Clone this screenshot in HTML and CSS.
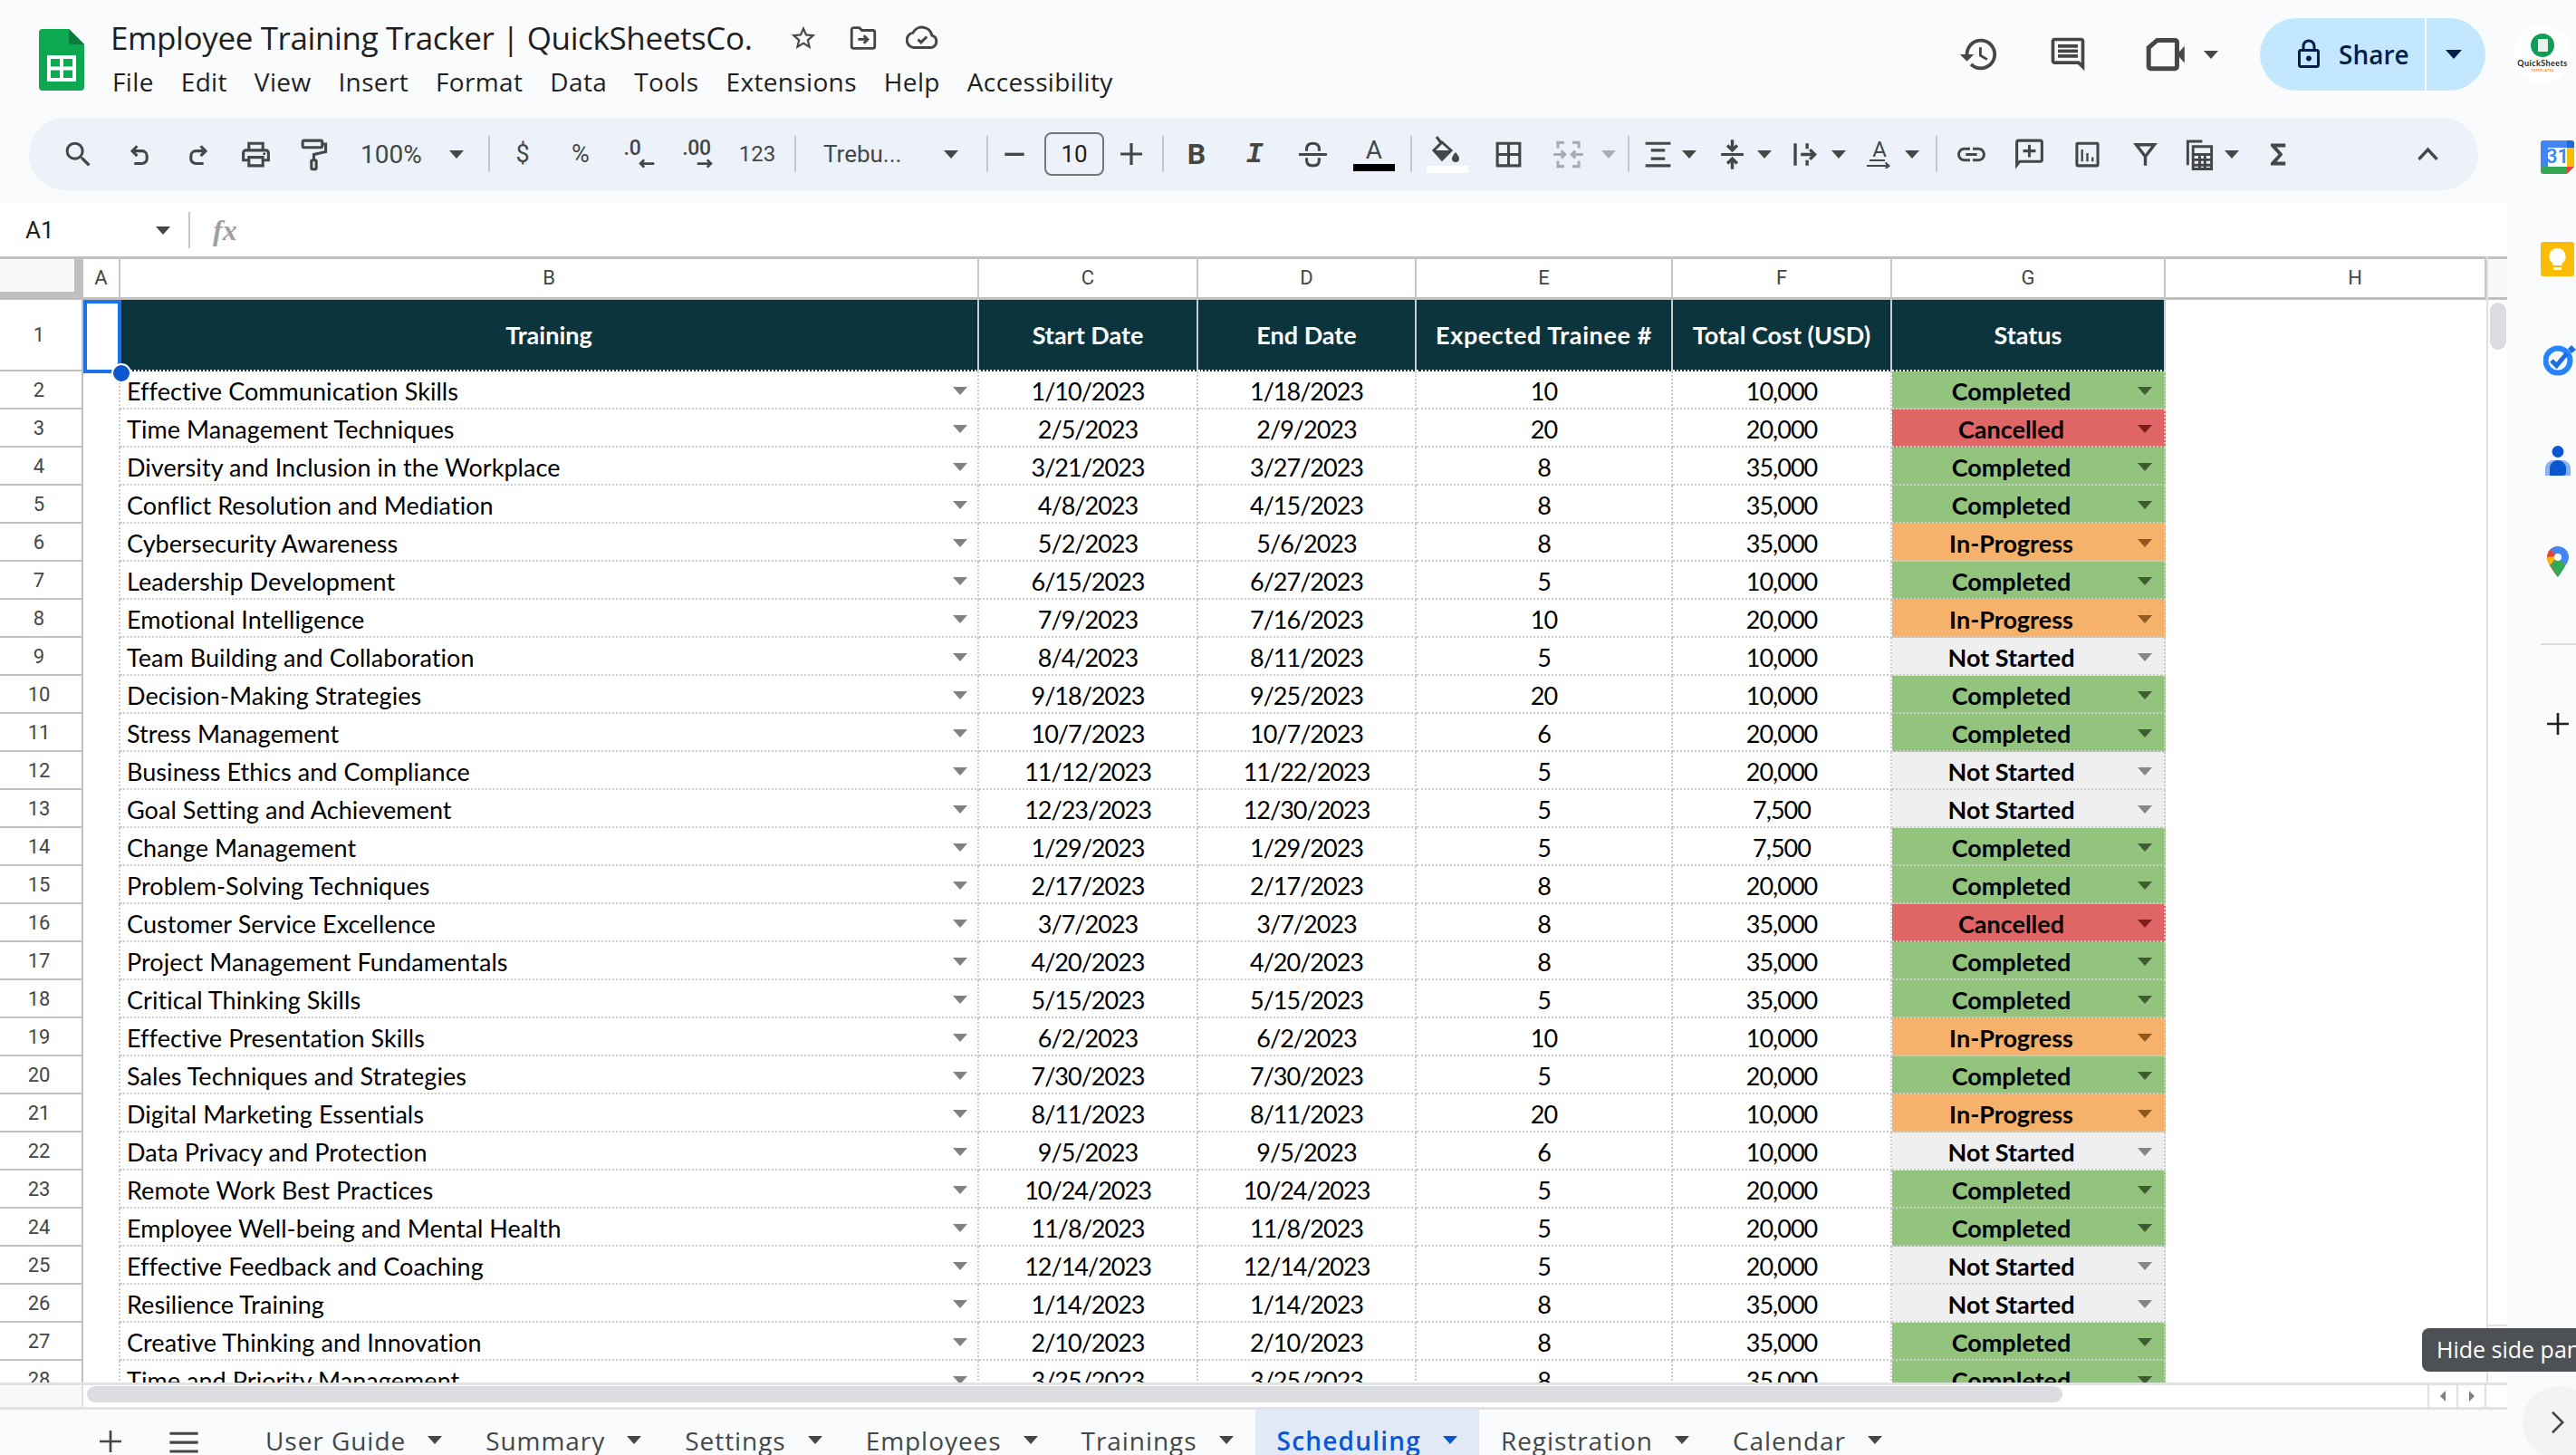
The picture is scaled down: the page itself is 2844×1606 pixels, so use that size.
FILE: index.html
```html
<!DOCTYPE html>
<html lang="en">
<head>
<meta charset="utf-8">
<title>Employee Training Tracker | QuickSheetsCo.</title>
<link rel="stylesheet" href="styles.css">
</head>
<body>
<div class="app">
<main class="main">
  <header class="head">
    <svg class="logo" viewBox="0 0 50 68"><path d="M4 0H33L50 17V64a4 4 0 0 1-4 4H4a4 4 0 0 1-4-4V4a4 4 0 0 1 4-4z" fill="#0da84f"/><path d="M33 0V13a4 4 0 0 0 4 4H50z" fill="#0b7a3a"/><path d="M9 29H41V58H9zM13 33V41.500H23V33zM27 33V41.500H37V33zM13 45.500V54H23V45.500zM27 45.500V54H37V45.500z" fill="#fff" fill-rule="evenodd"/></svg>
    <div class="titles">
      <div class="titlerow">
        <span class="doc">Employee Training Tracker | QuickSheetsCo.</span>
        <svg class="ti i-star" viewBox="0 0 24 24"><path d="M22 9.240l-7.190-.620L12 2 9.190 8.630 2 9.240l5.460 4.730L5.820 21 12 17.270 18.180 21l-1.630-7.030L22 9.240zM12 15.400l-3.760 2.270 1-4.280-3.320-2.880 4.380-.380L12 6.100l1.710 4.040 4.380.380-3.320 2.880 1 4.280L12 15.400z"/></svg>
        <svg class="ti i-move" viewBox="0 0 24 24"><path class="ln" d="M3 5.500a1.500 1.500 0 0 1 1.500-1.500H9l2 2h8.500A1.500 1.500 0 0 1 21 7.500v11a1.500 1.500 0 0 1-1.500 1.500h-15A1.500 1.500 0 0 1 3 18.500zM8 13h7M12.500 10l3 3-3 3"/></svg>
        <svg class="ti i-cloud" viewBox="0 0 24 24"><path class="ln" d="M19.300 10.100A7.500 7.500 0 0 0 5.300 8.100 5.500 5.500 0 0 0 6 19h12.800a4.600 4.600 0 0 0 .5-8.900zM9 13l2.200 2.200L15.500 11"/></svg>
      </div>
      <nav class="menu"><span>File</span><span>Edit</span><span>View</span><span>Insert</span><span>Format</span><span>Data</span><span>Tools</span><span>Extensions</span><span>Help</span><span>Accessibility</span></nav>
    </div>
    <div class="headright">
      <svg class="hi hi-hist" viewBox="0 0 24 24"><path d="M13 3a9 9 0 0 0-9 9H1l3.890 3.890.070.140L9 12H6c0-3.870 3.130-7 7-7s7 3.130 7 7-3.130 7-7 7c-1.930 0-3.680-.790-4.940-2.060l-1.420 1.420A8.954 8.954 0 0 0 13 21a9 9 0 0 0 0-18zm-1 5v5l4.280 2.540.720-1.210-3.500-2.080V8H12z"/></svg>
      <svg class="hi hi-comm" viewBox="0 0 24 24"><path d="M21.990 4c0-1.100-.890-2-1.990-2H4c-1.100 0-2 .900-2 2v12c0 1.100.900 2 2 2h14l4 4-.010-18zM20 4v13.170L18.830 16H4V4h16zM6 12h12v2H6zm0-3h12v2H6zm0-3h12v2H6z"/></svg>
      <svg class="hi hi-video" viewBox="0 0 24 24"><path class="ln2" d="M7 4.500h9.500a1 1 0 0 1 1 1v13a1 1 0 0 1-1 1h-13a1 1 0 0 1-1-1V8.500z"/><path d="M17.500 12l4-4.500v9z"/></svg>
      <i class="caret hc"></i>
      <div class="share">
        <div class="sharemain">
          <svg class="lock" viewBox="0 0 24 24"><path d="M18 8h-1V6c0-2.760-2.240-5-5-5S7 3.240 7 6v2H6c-1.100 0-2 .900-2 2v10c0 1.100.900 2 2 2h12c1.100 0 2-.900 2-2V10c0-1.100-.900-2-2-2zM9 6c0-1.660 1.340-3 3-3s3 1.340 3 3v2H9V6zm9 14H6V10h12v10zm-6-3c1.100 0 2-.900 2-2s-.900-2-2-2-2 .900-2 2 .900 2 2 2z"/></svg>
          <span>Share</span>
        </div>
        <div class="sharedrop"><i class="caret navy"></i></div>
      </div>
    </div>
  </header>

  <div class="toolwrap">
    <div class="toolbar">
      <span class="t m-search"><svg viewBox="0 0 24 24"><path d="M15.500 14h-.790l-.280-.270A6.471 6.471 0 0 0 16 9.500 6.500 6.500 0 1 0 9.500 16c1.610 0 3.090-.590 4.230-1.570l.270.280v.790l5 4.990L20.490 19l-4.990-5zm-6 0C7.010 14 5 11.990 5 9.500S7.010 5 9.500 5 14 7.010 14 9.500 11.990 14 9.500 14z"/></svg></span>
      <span class="t"><svg viewBox="0 0 24 24"><path class="ln" d="M10 6L6.500 9.500 10 13M7 9.500h6.500A3.500 3.500 0 0 1 17 13v2a3.500 3.500 0 0 1-3.500 3.500H8"/></svg></span>
      <span class="t"><svg viewBox="0 0 24 24"><path class="ln" d="M14 6l3.500 3.500L14 13M17 9.500h-6.500A3.500 3.500 0 0 0 7 13v2a3.500 3.500 0 0 0 3.500 3.500H16"/></svg></span>
      <span class="t"><svg viewBox="0 0 24 24"><path d="M19 8h-1V3H6v5H5c-1.660 0-3 1.340-3 3v6h4v4h12v-4h4v-6c0-1.660-1.340-3-3-3zM8 5h8v3H8V5zm8 14H8v-4h8v4zm2-4v-2H6v2H4v-4c0-.550.450-1 1-1h14c.550 0 1 .450 1 1v4h-2z"/><circle cx="18" cy="11.500" r="1"/></svg></span>
      <span class="t"><svg viewBox="0 0 24 24"><path class="ln" d="M5 2h12a1 1 0 0 1 1 1v3a1 1 0 0 1-1 1H5a1 1 0 0 1-1-1V3a1 1 0 0 1 1-1zM18 4.500h2.500V10l-8.500 2v4"/><rect class="ln" x="10.250" y="16" width="3.500" height="6.500" rx="1"/></svg></span>
      <span class="zoom"><span class="zoomtxt">100%</span><i class="caret"></i></span>
      <i class="sep"></i>
      <span class="t tx">$</span>
      <span class="t tx">%</span>
      <span class="t dec d1"><b>.0</b><svg viewBox="0 0 16 8"><path class="ln" d="M14 4H3M6 1L3 4l3 3"/></svg></span>
      <span class="t dec d2"><b>.00</b><svg viewBox="0 0 16 8"><path class="ln" d="M2 4h11M10 1l3 3-3 3"/></svg></span>
      <span class="t tx t123">123</span>
      <i class="sep"></i>
      <span class="fontsel"><span>Trebu...</span><i class="caret"></i></span>
      <i class="sep"></i>
      <span class="t pm w50"><svg viewBox="0 0 24 24"><path d="M4 11h16v2.500H4z"/></svg></span>
      <span class="sizebox">10</span>
      <span class="t pm w60"><svg viewBox="0 0 24 24"><path d="M10.800 3h2.400v7.800H21v2.400h-7.800V21h-2.400v-7.800H3v-2.400h7.800z"/></svg></span>
      <i class="sep"></i>
      <span class="t glyph gb">B</span>
      <span class="t glyph gi">I</span>
      <span class="t"><svg viewBox="0 0 24 24"><path class="ln" d="M2 12h20M7.500 9.500V8C7.500 5 9.500 4 12 4s4.500 1 4.500 4v1.500M7.500 14.500V16c0 3 2 4 4.500 4s4.500-1 4.500-4v-1.500"/></svg></span>
      <span class="t w72 colorA"><span class="aglyph">A</span><i class="bar black"></i></span>
      <i class="sep"></i>
      <span class="t w70 colorA"><svg class="bucket" viewBox="0 0 40 32"><path class="ln3" d="M14 8L5 17l9 10 10-10zM8 2l6 8"/><path d="M5 17h19L14 27z"/><path d="M29 19s-4 4.500-4 7a4 4 0 0 0 8 0c0-2.500-4-7-4-7z"/></svg><i class="bar white"></i></span>
      <span class="t"><svg viewBox="0 0 24 24"><path d="M3 3h18v18H3V3zm2 2v6h6V5H5zm8 0v6h6V5h-6zM5 13v6h6v-6H5zm8 0v6h6v-6h-6z" fill-rule="evenodd"/></svg></span>
      <span class="t dim m-d0"><svg viewBox="0 0 24 24"><path class="ln" d="M9 3.500H4.500v4M15 3.500h4.500v4M9 20.500H4.500v-4M15 20.500h4.500v-4M1.500 12h8M7 9.500L9.500 12 7 14.500M22.500 12h-8M17 9.500L14.500 12l2.500 2.500"/></svg></span>
      <i class="caret dimc m-d1"></i>
      <i class="sep s-b"></i>
      <span class="ic m-h"><svg viewBox="0 0 24 24"><path d="M3 3h18v2H3zM7 8h10v2H7zM7 14h10v2H7zM3 19h18v2H3z"/></svg></span>
      <i class="caret m-h2"></i>
      <span class="ic m-v"><svg viewBox="0 0 24 24"><path class="ln" d="M4 12h16"/><path class="ln25" d="M12 1.500v7M8.500 5.500L12 9l3.500-3.500M12 22.500v-7M8.500 18.500L12 15l3.500 3.500"/></svg></span>
      <i class="caret m-v2"></i>
      <span class="ic m-w"><svg viewBox="0 0 24 24"><path class="ln25" d="M6.500 4v16M15 4v4M15 16v4M10.500 12h10M17 8.500l3.500 3.500-3.500 3.500"/></svg></span>
      <i class="caret m-w2"></i>
      <span class="ic m-r aglyph2">A<svg class="rotbar" viewBox="0 0 28 10"><path class="ln" d="M3 1h17M0 7h24M20.500 3.500L24.500 7l-4 3.500"/></svg></span>
      <i class="caret m-r2"></i>
      <i class="sep s-c"></i>
      <span class="t m-link"><svg viewBox="0 0 24 24"><path d="M3.900 12c0-1.710 1.390-3.100 3.100-3.100h4V7H7c-2.760 0-5 2.240-5 5s2.240 5 5 5h4v-1.900H7c-1.710 0-3.100-1.390-3.100-3.100zM8 13h8v-2H8v2zm9-6h-4v1.900h4c1.710 0 3.100 1.390 3.100 3.100s-1.390 3.100-3.100 3.100h-4V17h4c2.760 0 5-2.240 5-5s-2.240-5-5-5z"/></svg></span>
      <span class="t"><svg viewBox="0 0 24 24"><path d="M22 3c0-1.100-.900-2-2-2H4c-1.100 0-2 .900-2 2v19.500L5.500 18H20c1.100 0 2-.900 2-2V3zm-2 13H4.500L4 17V3h16v13zM13 5h-2v3.500H7.500v2H11V14h2v-3.500h3.500v-2H13z"/></svg></span>
      <span class="t"><svg viewBox="0 0 24 24"><path d="M5 3h14a1.500 1.500 0 0 1 1.500 1.500v15A1.500 1.500 0 0 1 19 21H5a1.500 1.500 0 0 1-1.500-1.500v-15A1.500 1.500 0 0 1 5 3zm.500 2v14h13V5zM7.500 8.500H9V17H7.500zM11.250 11h1.500v6h-1.500zM15 14h1.500v3H15z" fill-rule="evenodd"/></svg></span>
      <span class="t"><svg viewBox="0 0 24 24"><path class="ln25" d="M5.500 5h13L12 13.500zM12 13.500V20"/></svg></span>
      <span class="ic m-fn"><svg viewBox="0 0 24 24"><path d="M2 1h12v2H4v17H2zM6 5h16v19H6zm2 2v4h12V7zm0 6v2h3v-2zm5 0v2h2v-2zm4 0v2h3v-2zM8 17v2h3v-2zm5 0v2h2v-2zm4 0v2h3v-2zM8 21v1h3v-1zm5 0v1h2v-1zm4 0v1h3v-1z" fill-rule="evenodd"/></svg></span>
      <i class="caret m-fn2"></i>
      <span class="t m-sig"><svg viewBox="0 0 24 24"><path d="M17 4.200H6.500v1.800L12 12l-5.500 6v1.800H17v-2.600h-6.300l4.500-5.200-4.500-5.200H17z"/></svg></span>
      <span class="t m-up"><svg viewBox="0 0 24 24"><path class="ln25" d="M5.500 15.500l6.500-7 6.500 7"/></svg></span>
    </div>
  </div>

  <div class="formula">
    <span class="namebox"><span>A1</span><i class="caret"></i></span>
    <i class="sep fsep"></i>
    <span class="fx">fx</span>
  </div>

  <section class="gridarea">
    <div class="sheet">
      <div class="cols">
        <div class="corner"></div>
        <div class="ch">A</div><div class="ch">B</div><div class="ch">C</div><div class="ch">D</div><div class="ch">E</div><div class="ch">F</div><div class="ch">G</div><div class="ch chh">H</div>

        <div class="rh">1</div><div class="a"></div><div class="hd">Training</div><div class="hd">Start Date</div><div class="hd">End Date</div><div class="hd wide">Expected Trainee #</div><div class="hd">Total Cost (USD)</div><div class="hd">Status</div><div class="h"></div>

        <div class="rh">2</div><div class="a"></div><div class="b"><span>Effective Communication Skills</span><i class="dd"></i></div><div class="c">1/10/2023</div><div class="c">1/18/2023</div><div class="c">10</div><div class="c">10,000</div><div class="st done"><span>Completed</span><i class="dd"></i></div><div class="h"></div>
        <div class="rh">3</div><div class="a"></div><div class="b"><span>Time Management Techniques</span><i class="dd"></i></div><div class="c">2/5/2023</div><div class="c">2/9/2023</div><div class="c">20</div><div class="c">20,000</div><div class="st cancel"><span>Cancelled</span><i class="dd"></i></div><div class="h"></div>
        <div class="rh">4</div><div class="a"></div><div class="b"><span>Diversity and Inclusion in the Workplace</span><i class="dd"></i></div><div class="c">3/21/2023</div><div class="c">3/27/2023</div><div class="c">8</div><div class="c">35,000</div><div class="st done"><span>Completed</span><i class="dd"></i></div><div class="h"></div>
        <div class="rh">5</div><div class="a"></div><div class="b"><span>Conflict Resolution and Mediation</span><i class="dd"></i></div><div class="c">4/8/2023</div><div class="c">4/15/2023</div><div class="c">8</div><div class="c">35,000</div><div class="st done"><span>Completed</span><i class="dd"></i></div><div class="h"></div>
        <div class="rh">6</div><div class="a"></div><div class="b"><span>Cybersecurity Awareness</span><i class="dd"></i></div><div class="c">5/2/2023</div><div class="c">5/6/2023</div><div class="c">8</div><div class="c">35,000</div><div class="st prog"><span>In-Progress</span><i class="dd"></i></div><div class="h"></div>
        <div class="rh">7</div><div class="a"></div><div class="b"><span>Leadership Development</span><i class="dd"></i></div><div class="c">6/15/2023</div><div class="c">6/27/2023</div><div class="c">5</div><div class="c">10,000</div><div class="st done"><span>Completed</span><i class="dd"></i></div><div class="h"></div>
        <div class="rh">8</div><div class="a"></div><div class="b"><span>Emotional Intelligence</span><i class="dd"></i></div><div class="c">7/9/2023</div><div class="c">7/16/2023</div><div class="c">10</div><div class="c">20,000</div><div class="st prog"><span>In-Progress</span><i class="dd"></i></div><div class="h"></div>
        <div class="rh">9</div><div class="a"></div><div class="b"><span>Team Building and Collaboration</span><i class="dd"></i></div><div class="c">8/4/2023</div><div class="c">8/11/2023</div><div class="c">5</div><div class="c">10,000</div><div class="st none"><span>Not Started</span><i class="dd"></i></div><div class="h"></div>
        <div class="rh">10</div><div class="a"></div><div class="b"><span>Decision-Making Strategies</span><i class="dd"></i></div><div class="c">9/18/2023</div><div class="c">9/25/2023</div><div class="c">20</div><div class="c">10,000</div><div class="st done"><span>Completed</span><i class="dd"></i></div><div class="h"></div>
        <div class="rh">11</div><div class="a"></div><div class="b"><span>Stress Management</span><i class="dd"></i></div><div class="c">10/7/2023</div><div class="c">10/7/2023</div><div class="c">6</div><div class="c">20,000</div><div class="st done"><span>Completed</span><i class="dd"></i></div><div class="h"></div>
        <div class="rh">12</div><div class="a"></div><div class="b"><span>Business Ethics and Compliance</span><i class="dd"></i></div><div class="c">11/12/2023</div><div class="c">11/22/2023</div><div class="c">5</div><div class="c">20,000</div><div class="st none"><span>Not Started</span><i class="dd"></i></div><div class="h"></div>
        <div class="rh">13</div><div class="a"></div><div class="b"><span>Goal Setting and Achievement</span><i class="dd"></i></div><div class="c">12/23/2023</div><div class="c">12/30/2023</div><div class="c">5</div><div class="c">7,500</div><div class="st none"><span>Not Started</span><i class="dd"></i></div><div class="h"></div>
        <div class="rh">14</div><div class="a"></div><div class="b"><span>Change Management</span><i class="dd"></i></div><div class="c">1/29/2023</div><div class="c">1/29/2023</div><div class="c">5</div><div class="c">7,500</div><div class="st done"><span>Completed</span><i class="dd"></i></div><div class="h"></div>
        <div class="rh">15</div><div class="a"></div><div class="b"><span>Problem-Solving Techniques</span><i class="dd"></i></div><div class="c">2/17/2023</div><div class="c">2/17/2023</div><div class="c">8</div><div class="c">20,000</div><div class="st done"><span>Completed</span><i class="dd"></i></div><div class="h"></div>
        <div class="rh">16</div><div class="a"></div><div class="b"><span>Customer Service Excellence</span><i class="dd"></i></div><div class="c">3/7/2023</div><div class="c">3/7/2023</div><div class="c">8</div><div class="c">35,000</div><div class="st cancel"><span>Cancelled</span><i class="dd"></i></div><div class="h"></div>
        <div class="rh">17</div><div class="a"></div><div class="b"><span>Project Management Fundamentals</span><i class="dd"></i></div><div class="c">4/20/2023</div><div class="c">4/20/2023</div><div class="c">8</div><div class="c">35,000</div><div class="st done"><span>Completed</span><i class="dd"></i></div><div class="h"></div>
        <div class="rh">18</div><div class="a"></div><div class="b"><span>Critical Thinking Skills</span><i class="dd"></i></div><div class="c">5/15/2023</div><div class="c">5/15/2023</div><div class="c">5</div><div class="c">35,000</div><div class="st done"><span>Completed</span><i class="dd"></i></div><div class="h"></div>
        <div class="rh">19</div><div class="a"></div><div class="b"><span>Effective Presentation Skills</span><i class="dd"></i></div><div class="c">6/2/2023</div><div class="c">6/2/2023</div><div class="c">10</div><div class="c">10,000</div><div class="st prog"><span>In-Progress</span><i class="dd"></i></div><div class="h"></div>
        <div class="rh">20</div><div class="a"></div><div class="b"><span>Sales Techniques and Strategies</span><i class="dd"></i></div><div class="c">7/30/2023</div><div class="c">7/30/2023</div><div class="c">5</div><div class="c">20,000</div><div class="st done"><span>Completed</span><i class="dd"></i></div><div class="h"></div>
        <div class="rh">21</div><div class="a"></div><div class="b"><span>Digital Marketing Essentials</span><i class="dd"></i></div><div class="c">8/11/2023</div><div class="c">8/11/2023</div><div class="c">20</div><div class="c">10,000</div><div class="st prog"><span>In-Progress</span><i class="dd"></i></div><div class="h"></div>
        <div class="rh">22</div><div class="a"></div><div class="b"><span>Data Privacy and Protection</span><i class="dd"></i></div><div class="c">9/5/2023</div><div class="c">9/5/2023</div><div class="c">6</div><div class="c">10,000</div><div class="st none"><span>Not Started</span><i class="dd"></i></div><div class="h"></div>
        <div class="rh">23</div><div class="a"></div><div class="b"><span>Remote Work Best Practices</span><i class="dd"></i></div><div class="c">10/24/2023</div><div class="c">10/24/2023</div><div class="c">5</div><div class="c">20,000</div><div class="st done"><span>Completed</span><i class="dd"></i></div><div class="h"></div>
        <div class="rh">24</div><div class="a"></div><div class="b"><span>Employee Well-being and Mental Health</span><i class="dd"></i></div><div class="c">11/8/2023</div><div class="c">11/8/2023</div><div class="c">5</div><div class="c">20,000</div><div class="st done"><span>Completed</span><i class="dd"></i></div><div class="h"></div>
        <div class="rh">25</div><div class="a"></div><div class="b"><span>Effective Feedback and Coaching</span><i class="dd"></i></div><div class="c">12/14/2023</div><div class="c">12/14/2023</div><div class="c">5</div><div class="c">20,000</div><div class="st none"><span>Not Started</span><i class="dd"></i></div><div class="h"></div>
        <div class="rh">26</div><div class="a"></div><div class="b"><span>Resilience Training</span><i class="dd"></i></div><div class="c">1/14/2023</div><div class="c">1/14/2023</div><div class="c">8</div><div class="c">35,000</div><div class="st none"><span>Not Started</span><i class="dd"></i></div><div class="h"></div>
        <div class="rh">27</div><div class="a"></div><div class="b"><span>Creative Thinking and Innovation</span><i class="dd"></i></div><div class="c">2/10/2023</div><div class="c">2/10/2023</div><div class="c">8</div><div class="c">35,000</div><div class="st done"><span>Completed</span><i class="dd"></i></div><div class="h"></div>
        <div class="rh">28</div><div class="a"></div><div class="b"><span>Time and Priority Management</span><i class="dd"></i></div><div class="c">3/25/2023</div><div class="c">3/25/2023</div><div class="c">8</div><div class="c">35,000</div><div class="st done"><span>Completed</span><i class="dd"></i></div><div class="h"></div>
      </div>
      <div class="selection"></div>
      <div class="handle"></div>
    </div>
    <div class="vscroll"><div class="vtop"></div><div class="vthumb"></div><div class="vline"></div></div>
  </section>

  <div class="hscroll">
    <div class="hleft"></div>
    <div class="hthumb"></div>
    <div class="hbtns"><span class="hb"><i class="tri-l"></i></span><span class="hb"><i class="tri-r"></i></span></div>
  </div>

  <footer class="tabs">
    <span class="tabicon plus"><svg viewBox="0 0 24 24"><path d="M11 3h2v8h8v2h-8v8h-2v-8H3v-2h8z"/></svg></span>
    <span class="tabicon lines"><svg viewBox="0 0 24 24"><path d="M1 4h22v2.200H1zM1 11h22v2.200H1zM1 18h22v2.200H1z"/></svg></span>
    <span class="tab">User Guide<i class="caret"></i></span>
    <span class="tab">Summary<i class="caret"></i></span>
    <span class="tab">Settings<i class="caret"></i></span>
    <span class="tab">Employees<i class="caret"></i></span>
    <span class="tab">Trainings<i class="caret"></i></span>
    <span class="tab active">Scheduling<i class="caret"></i></span>
    <span class="tab">Registration<i class="caret"></i></span>
    <span class="tab">Calendar<i class="caret"></i></span>
  </footer>
</main>

<aside class="rail">
  <div class="avatar"><i class="avdot"></i><span class="avname">QuickSheets</span><span class="avsub">TEMPLATES</span></div>
  <svg class="ri r-cal" viewBox="0 0 37 37"><path d="M3 0H29V8H8V29H0V3a3 3 0 0 1 3-3z" fill="#4285f4"/><path d="M29 0h5a3 3 0 0 1 3 3v5h-8z" fill="#1967d2"/><path d="M29 8h8v21h-8z" fill="#fbbc04"/><path d="M8 29H29V37H3a3 3 0 0 1-3-3V29z" fill="#34a853"/><path d="M29 29h8l-8 8z" fill="#ea4335"/><rect x="8" y="8" width="21" height="21" fill="#fff"/><text x="18.500" y="25" class="caltext">31</text></svg>
  <svg class="ri r-keep" viewBox="0 0 37 38"><rect width="37" height="38" rx="3" fill="#fbbc04"/><path d="M18.500 7a9 9 0 0 0-5 16.500V26h10v-2.500a9 9 0 0 0-5-16.500z" fill="#fff"/><rect x="14" y="28" width="9" height="3" fill="#fff"/></svg>
  <svg class="ri r-task" viewBox="0 0 38 36"><circle cx="16" cy="19" r="13.500" fill="none" stroke="#2684fc" stroke-width="6"/><path d="M9 19l5.500 5.500L26 11" fill="none" stroke="#1a6fe0" stroke-width="5"/><path d="M27 6l4-4 5 5-5 4z" fill="#1a6fe0"/></svg>
  <svg class="ri r-con" viewBox="0 0 28 34"><circle cx="14" cy="6.500" r="6.500" fill="#0b57d0"/><path d="M0 33V25a9 9 0 0 1 9-9h10a9 9 0 0 1 9 9v8z" fill="#8ab0f0"/><path d="M5 33V25a9 9 0 0 1 9-9a9 9 0 0 1 9 9v4a4 4 0 0 1-4 4z" fill="#0b57d0"/></svg>
  <svg class="ri r-map" viewBox="0 0 24 34"><path d="M12 0A12 12 0 0 0 0 12c0 8 12 22 12 22z" fill="#ea4335"/><path d="M12 0a12 12 0 0 1 12 12c0 3-1.500 6-3.500 9L4 3.500A12 12 0 0 1 12 0z" fill="#4285f4"/><path d="M0 12c0 3 1.500 6 3.500 9l8-10z" fill="#fbbc04"/><path d="M3.500 21C6 25 12 34 12 34s6-8 8.500-13L12 11z" fill="#34a853"/><circle cx="12" cy="12" r="4" fill="#fff"/></svg>
  <i class="raildiv"></i>
  <svg class="ri r-plus" viewBox="0 0 24 24"><path d="M10.800 1h2.400v9.800H23v2.400h-9.800V23h-2.400v-9.800H1v-2.400h9.800z"/></svg>
  <div class="circle"><svg viewBox="0 0 24 24"><path d="M8 3l9 9-9 9" fill="none" stroke="#444746" stroke-width="2"/></svg></div>
</aside>
</div>
<div class="tooltip">Hide side pan</div>
</body>
</html>
```
FILE: styles.css
```css
*{box-sizing:border-box}
html,body{margin:0;padding:0;width:2844px;height:1606px;overflow:hidden;background:#f9fbfd}
body{font-family:"Open Sans","Liberation Sans",sans-serif;color:#1f1f1f;position:relative}
i{display:block;font-style:normal}
.app{display:flex;width:2844px;height:1606px;overflow:hidden}
.main{width:2768px;flex:none;display:flex;flex-direction:column;height:1606px}
.caret{width:0;height:0;flex:none;border-left:8px solid transparent;border-right:8px solid transparent;border-top:9px solid #444746}
.navy{border-top-color:#041e49;border-left-width:9px;border-right-width:9px;border-top-width:10px}
.ln{fill:none;stroke:#444746;stroke-width:2}
.ln2{fill:none;stroke:#444746;stroke-width:2.4}
.ln25{fill:none;stroke:#444746;stroke-width:2.2}
.ln3{fill:none;stroke:#444746;stroke-width:3}
svg{display:block;fill:#444746}

/* header */
.head{height:130px;display:flex;padding:27px 24px 0 43px;flex:none;position:relative}
.logo{width:50px;height:68px;margin-top:5px;flex:none}
.titles{margin-left:29px}
.titlerow{display:flex;align-items:center;height:30px}
.doc{font-size:35px;line-height:30px;color:#1f1f1f;letter-spacing:-.38px}
.ti{width:32px;height:32px;flex:none}
.i-star{margin-left:40px}
.i-move{margin-left:33px;width:34px;height:34px}
.i-cloud{margin-left:30px;width:36px;height:36px}
.menu{display:flex;margin-top:15px;font-size:28px;letter-spacing:.35px;line-height:36px;color:#1f1f1f;gap:30px;padding-left:2px}
.headright{margin-left:auto;display:flex;align-items:center;height:80px;margin-top:-7px}
.hi{width:46px;height:46px;flex:none}
.hi-comm{margin-left:53px;width:44px;height:44px}
.hi-video{margin-left:62px;width:50px;height:50px}
.hc{margin-left:16px;margin-right:46px}
.share{width:249px;height:80px;display:flex;border-radius:40px;background:#c2e7ff;overflow:hidden;color:#041e49}
.sharemain{width:182px;display:flex;align-items:center;padding-left:36px;font-size:28px;font-weight:600;gap:15px}
.lock{width:36px;height:36px;fill:#041e49;flex:none}
.sharedrop{flex:1;border-left:2px solid #f9fbfd;display:flex;align-items:center;justify-content:center;padding-right:6px}

/* toolbar */
.toolwrap{height:95px;flex:none;padding:0 32px;position:relative}
.toolbar{height:80px;width:2704px;background:#edf2fa;border-radius:40px;display:flex;align-items:center;padding:0 24px 0 22px;color:#444746}
.t{width:64px;height:60px;flex:none;display:flex;align-items:center;justify-content:center;position:relative}
.t svg{width:37px;height:37px}
.ic{width:44px;height:44px;flex:none;display:flex;align-items:center;justify-content:center}
.ic svg{width:37px;height:37px}
.sep{width:2px;height:40px;background:#c7c7c7;flex:none;margin:0 4px}
.m-search{margin-right:4px}
.zoom{width:157px;flex:none;display:flex;align-items:center;padding-left:20px;font-size:27px;gap:24px}
.zoomtxt{width:74px;white-space:nowrap;font-family:Roboto,"Open Sans",sans-serif;font-size:28px}
.tx{font-family:Roboto,sans-serif;font-size:27px}
.t123{width:72px;font-size:24px;padding-right:2px}
.dec{flex-direction:column;gap:2px}
.dec b{font-family:Roboto,sans-serif;font-weight:500;font-size:23px;line-height:18px;letter-spacing:-.3px}
.dec svg{width:22px;height:11px}
.d1 b{margin-left:-14px}
.d1 svg{margin-left:18px}
.d2 svg{margin-left:18px}
.fontsel{width:202px;flex:none;display:flex;justify-content:space-between;align-items:center;padding:0 27px 0 26px;font-size:26px;font-family:Roboto,sans-serif}
.w50{width:50px}.w60{width:60px}.w70{width:70px}.w72{width:72px}
.pm svg{width:32px;height:32px}
.sizebox{width:66px;height:48px;margin-left:8px;flex:none;border:2px solid #747775;border-radius:8px;display:flex;align-items:center;justify-content:center;font-size:26px;font-family:Roboto,sans-serif;color:#1f1f1f}
.glyph{font-weight:700;font-size:32px}
.gb{font-family:Roboto,sans-serif}
.gi{font-family:"Liberation Mono",monospace;font-style:italic}
.colorA{flex-direction:column}
.t .bucket{width:40px;height:32px;margin-bottom:2px}
.aglyph{font-family:Roboto,sans-serif;font-size:28px;line-height:30px;font-weight:400;height:30px}
.bar{width:46px;height:8px;flex:none}
.black{background:#000}
.white{background:#fff}
.dim svg .ln{stroke:#a8adb5}
.dimc{border-top-color:#a8adb5}
.m-d0{margin-left:2px}
.m-d1{margin-left:5px;margin-right:1px}
.s-b{margin-left:12px}
.m-h{margin-left:5px;margin-right:6px}
.m-h2{margin-left:-1px}
.m-v{margin-left:17px}
.m-v2{margin-left:6px}
.m-w{margin-left:12px}
.m-w2{margin-left:10px}
.m-r{margin-left:15px}
.m-r2{margin-left:6px}
.s-c{margin-left:18px;margin-right:0}
.m-link{margin-left:5px}
.m-fn{margin-left:6px}
.m-fn svg{width:35px;height:35px}
.m-fn2{margin-left:6px}
.m-sig{margin-left:11px}
.m-up{margin-left:auto}
.aglyph2{flex-direction:column;font-family:Roboto,sans-serif;font-size:24px;line-height:22px;color:#444746}
.ic .rotbar{width:28px;height:10px;margin-top:0;flex:none}

/* formula bar */
.formula{height:58px;flex:none;background:#fff;display:flex;align-items:center;position:relative}
.namebox{width:208px;flex:none;display:flex;justify-content:space-between;align-items:center;padding:0 20px 0 28px;font-size:26px;font-family:Roboto,sans-serif;color:#1f1f1f}
.fsep{margin:0}
.fx{margin-left:25px;font-family:"Liberation Serif",serif;font-style:italic;font-size:32px;color:#a0a0a0;font-weight:700;line-height:30px}

/* grid */
.gridarea{height:1243px;flex:none;display:flex;background:#fff;overflow:hidden;position:relative}
.sheet{width:2745px;flex:none;position:relative;overflow:hidden;height:1243px}
.cols{display:grid;grid-template-columns:92px 41px 948px 242px 241px 283px 242px 302px 354px;grid-template-rows:48px 79px;grid-auto-rows:42px;font-family:Lato,"Open Sans",sans-serif;font-size:27px;color:#000}
.corner{background:#f8f9fa;border-top:3px solid #c0c0c0;border-right:10px solid #c0c0c0;border-bottom:9px solid #c0c0c0}
.ch{border-top:3px solid #c0c0c0;border-bottom:3px solid #c0c0c0;border-right:2px solid #c7c7c7;background:#fff;display:flex;align-items:center;justify-content:center;font:22px Roboto,sans-serif;color:#444746;padding-bottom:2px}
.chh{padding-left:66px}
.rh{background:#fff;border-right:2px solid #c0c0c0;border-bottom:2px solid #c0c0c0;display:flex;align-items:center;justify-content:center;font:22px Roboto,sans-serif;color:#444746;padding-right:4px}
.a{border-right:2px dotted #ccc}
.hd{background:#0c343d;color:#fff;font-weight:700;display:flex;align-items:center;justify-content:center;border-right:2px solid #c7cdcf;border-bottom:2px dotted #fff;white-space:nowrap}
.wide{letter-spacing:.6px}
.h{background:#fff}
.b,.c,.st{border-bottom:2px dotted #ccc;border-right:2px dotted #ccc;display:flex;align-items:center;white-space:nowrap;overflow:hidden;padding-top:2px}
.b{justify-content:space-between;padding-left:7px;padding-right:11px;letter-spacing:.06px}
.c{justify-content:center;letter-spacing:-1px}
.dd{width:0;height:0;flex:none;border-left:8px solid transparent;border-right:8px solid transparent;border-top:9px solid #808080}
.st{font-weight:700;padding-right:13px}
.st span{flex:1;text-align:center}
.st .dd{margin-left:8px}
.done{background:#93c47d}
.done .dd{border-top-color:#3f5a33}
.cancel{background:#e06666}
.cancel .dd{border-top-color:#7c1c1c}
.prog{background:#f6b26b}
.prog .dd{border-top-color:#8f5a20}
.none{background:#efefef}
.none .dd{border-top-color:#858585}
.selection{position:absolute;left:92px;top:48px;width:42px;height:81px;border:4px solid #1a73e8}
.handle{position:absolute;left:123px;top:118px;width:22px;height:22px;border-radius:50%;background:#0b57d0;border:2px solid #fff}

.vscroll{flex:1;background:#fff;border-left:2px solid #e0e0e0;position:relative}
.vtop{height:48px;background:#f8f9fa;border-top:3px solid #c0c0c0;border-bottom:3px solid #c0c0c0}
.vthumb{position:absolute;left:2px;top:51px;width:18px;height:52px;border-radius:9px;background:#dadce0}
.vline{position:absolute;left:0;right:0;top:1179px;height:2px;background:#e0e0e0}

.hscroll{height:30px;flex:none;background:#fff;border-top:3px solid #e1e3e1;border-bottom:3px solid #e1e3e1;display:flex;position:relative}
.hleft{width:92px;background:#f8f9fa;border-right:2px solid #e0e0e0}
.hthumb{width:2181px;margin:1px 0 0 4px;height:18px;border-radius:9px;background:#dadce0}
.hbtns{margin-left:auto;margin-right:23px;display:flex;background:#fff}
.hb{width:32px;border-left:2px solid #e0e0e0;display:flex;align-items:center;justify-content:center}
.hb:last-child{border-right:2px solid #e0e0e0;width:33px}
.tri-l{border-right:6px solid #7f7f7f;border-top:6px solid transparent;border-bottom:6px solid transparent}
.tri-r{border-left:6px solid #7f7f7f;border-top:6px solid transparent;border-bottom:6px solid transparent}

/* tabs */
.tabs{flex:1;display:flex;align-items:flex-start;background:#f9fbfd;overflow:hidden;font-size:28px;letter-spacing:.95px;color:#444746;padding-left:106px;position:relative}
.tabicon{width:34px;height:34px;flex:none;margin-top:19px}
.plus{width:32px;height:32px}
.lines{margin-left:48px;width:34px;margin-right:49px}
.tab{display:flex;align-items:center;gap:24px;height:50px;padding:17px 24px 0;white-space:nowrap;flex:none;line-height:36px}
.active{background:#e1e9f7;color:#0b57d0;font-weight:600;letter-spacing:1.2px}
.active .caret{border-top-color:#0b57d0}

/* rail */
.rail{flex:1;display:flex;flex-direction:column;background:#f9fbfd;position:relative;height:1606px;padding-left:37px}
.avatar{width:64px;height:64px;border-radius:50%;background:#fff;margin:28px 0 0 -30px;position:relative;display:flex;flex-direction:column;align-items:center;flex:none}
.avdot{width:26px;height:26px;border-radius:50%;background:#0f9d58;margin-top:9px;display:flex;align-items:center;justify-content:center;flex:none}
.avdot::after{content:"";width:11px;height:14px;background:#e8f3ec;border-radius:1px}
.avname{font:700 9px Lato,sans-serif;letter-spacing:.45px;color:#222;line-height:10px;margin-top:2px;white-space:nowrap}
.avsub{font:700 4px Lato,sans-serif;letter-spacing:.3px;color:#e98a3c;line-height:5px}
.ri{flex:none}
.r-cal{width:37px;height:37px;margin-top:63px}
.caltext{font:600 22px Roboto,sans-serif;fill:#4285f4;text-anchor:middle}
.r-keep{width:37px;height:38px;margin-top:75px}
.r-task{width:38px;height:36px;margin:74px 0 0 3px}
.r-con{width:28px;height:34px;margin:77px 0 0 5px}
.r-map{width:24px;height:34px;margin:77px 0 0 7px}
.raildiv{width:39px;height:2px;background:#dadce0;margin-top:73px;flex:none}
.r-plus{width:26px;height:26px;margin:74px 0 0 6px;fill:#1f1f1f}
.circle{position:absolute;left:17px;top:1530px;width:80px;height:80px;border-radius:50%;background:#f1f3f5;display:flex;align-items:center;padding-left:23px}
.circle svg{width:30px;height:30px}
.tooltip{position:absolute;left:2674px;top:1466px;width:200px;height:48px;border-radius:8px;background:#4d5156;color:#fff;font-size:25px;line-height:46px;padding-left:16px;white-space:nowrap;overflow:hidden}
```
